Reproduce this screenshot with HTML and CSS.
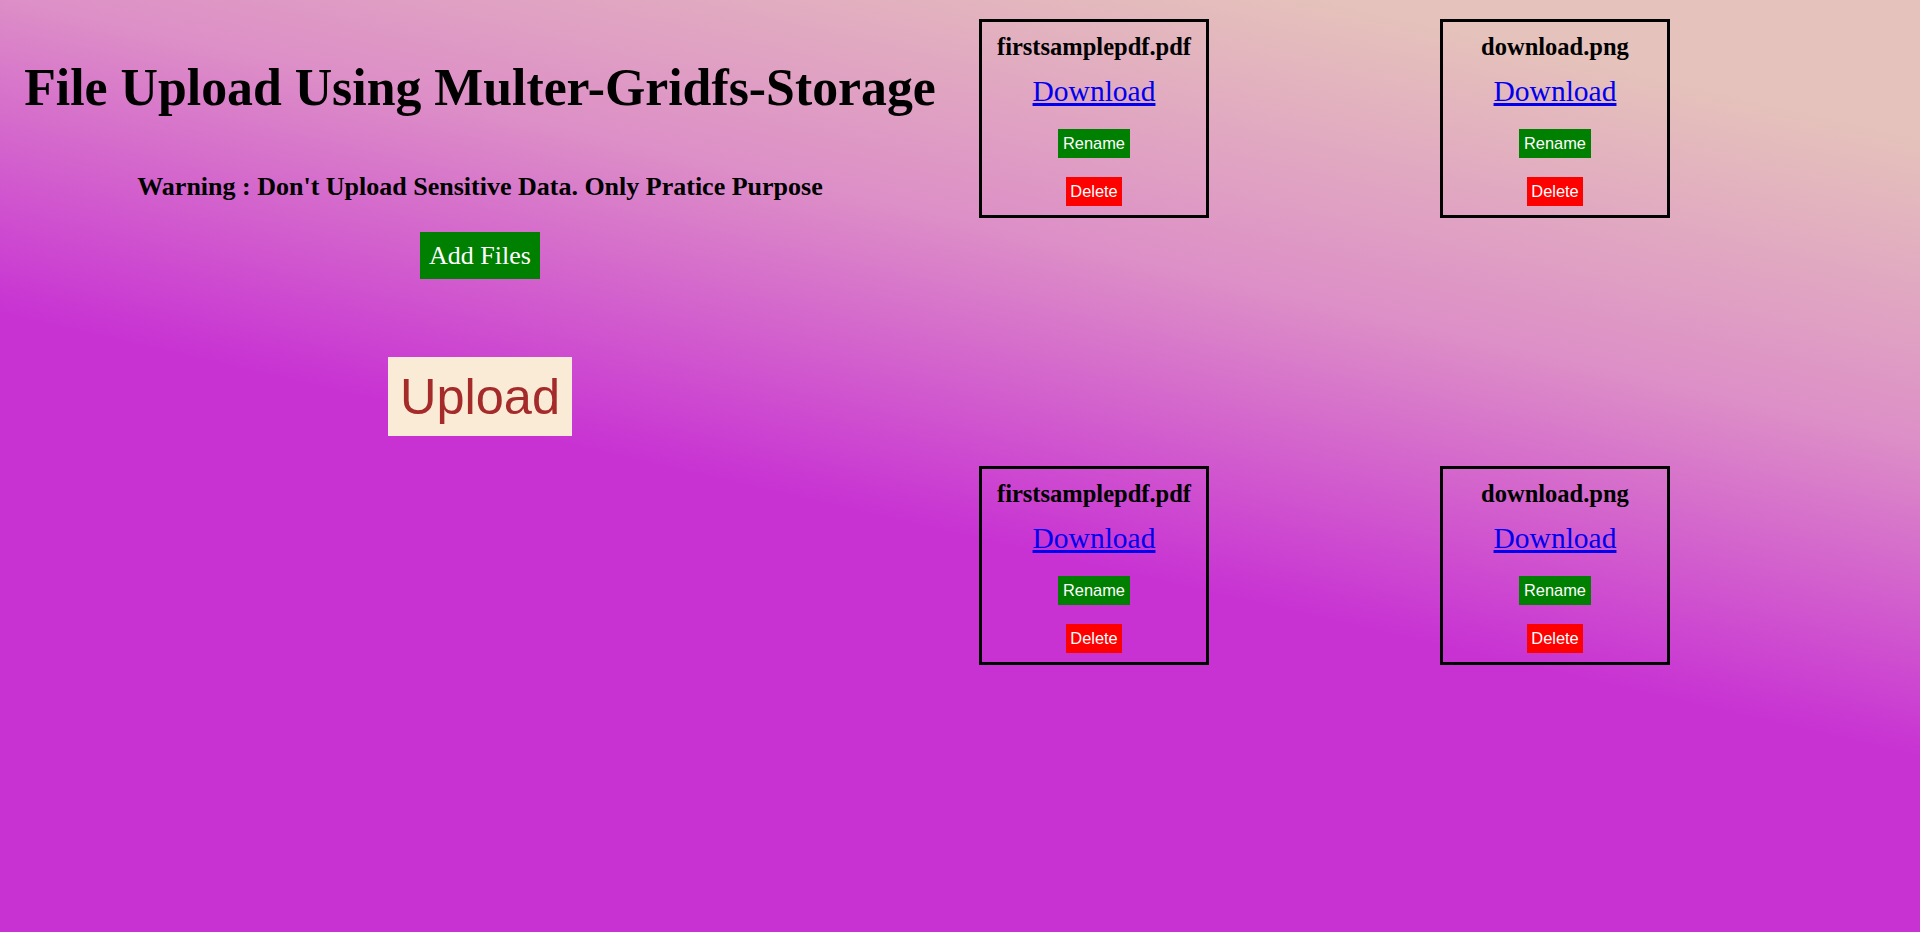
FILE: index.html
```html
<!DOCTYPE html>
<html lang="en">
<head>
<meta charset="utf-8">
<title>File Upload Using Multer-Gridfs-Storage</title>
<link rel="stylesheet" href="styles.css">
</head>
<body>
<div class="page">
  <section class="uploader">
    <h1 class="title">File Upload Using Multer-Gridfs-Storage</h1>
    <h3 class="warning">Warning : Don't Upload Sensitive Data. Only Pratice Purpose</h3>
    <button class="add-btn" type="button">Add Files</button>
    <button class="upload-btn" type="button">Upload</button>
  </section>
  <section class="files">
    <div class="card">
      <h2 class="card-name">firstsamplepdf.pdf</h2>
      <a class="card-link" href="#">Download</a>
      <button class="btn btn-rename" type="button">Rename</button>
      <button class="btn btn-delete" type="button">Delete</button>
    </div>
    <div class="card">
      <h2 class="card-name">download.png</h2>
      <a class="card-link" href="#">Download</a>
      <button class="btn btn-rename" type="button">Rename</button>
      <button class="btn btn-delete" type="button">Delete</button>
    </div>
    <div class="card">
      <h2 class="card-name">firstsamplepdf.pdf</h2>
      <a class="card-link" href="#">Download</a>
      <button class="btn btn-rename" type="button">Rename</button>
      <button class="btn btn-delete" type="button">Delete</button>
    </div>
    <div class="card">
      <h2 class="card-name">download.png</h2>
      <a class="card-link" href="#">Download</a>
      <button class="btn btn-rename" type="button">Rename</button>
      <button class="btn btn-delete" type="button">Delete</button>
    </div>
  </section>
</div>
</body>
</html>
```

FILE: styles.css
```css
html, body {
  margin: 0;
  padding: 0;
}

body {
  min-height: 932px;
  background: linear-gradient(13deg, #c832d3 45%, #dd8fc7 68%, #e5c2bb 90%);
  background-attachment: fixed;
  font-family: "Liberation Serif", "Times New Roman", serif;
  color: #000;
}

.page {
  display: grid;
  grid-template-columns: 960px 960px;
}

.uploader {
  display: flex;
  flex-direction: column;
  align-items: center;
  text-align: center;
  padding-top: 57.5px;
}

.title {
  margin: 0;
  font-size: 51.8px;
  line-height: 60px;
  font-weight: bold;
}

.warning {
  margin: 54.7px 0 0;
  font-size: 26px;
  line-height: 30px;
  font-weight: bold;
}

.add-btn {
  margin-top: 30px;
  font-family: "Liberation Serif", "Times New Roman", serif;
  font-size: 26px;
  line-height: 30px;
  padding: 8.5px 9px;
  background: #008000;
  color: #fff;
  border: 0;
  border-radius: 0;
}

.upload-btn {
  margin-top: 78px;
  font-family: "Liberation Sans", Arial, sans-serif;
  font-size: 50.5px;
  line-height: 58px;
  padding: 10.5px 12px;
  background: #faebd7;
  color: #a52a2a;
  border: 0;
  border-radius: 0;
}

.files {
  display: grid;
  grid-template-columns: 230px 230px;
  column-gap: 231px;
  row-gap: 248.3px;
  padding: 19px 0 0 19px;
  align-content: start;
}

.card {
  box-sizing: border-box;
  width: 230px;
  border: 3px solid #000;
  padding: 11px 0 9px;
  display: flex;
  flex-direction: column;
  align-items: center;
  text-align: center;
}

.card-name {
  margin: 0;
  font-size: 24.5px;
  line-height: 28px;
  font-weight: bold;
}

.card-link {
  margin-top: 13px;
  font-size: 29.5px;
  line-height: 34px;
  color: #0000ee;
  text-decoration: underline;
  text-decoration-thickness: 2.5px;
}

.btn {
  font-family: "Liberation Sans", Arial, sans-serif;
  font-size: 16.4px;
  line-height: 19px;
  padding: 5px 4.6px;
  color: #fff;
  border: 0;
  border-radius: 0;
}

.btn-rename {
  margin-top: 21px;
  background: #008000;
}

.btn-delete {
  margin-top: 19px;
  background: #ff0000;
}
```
